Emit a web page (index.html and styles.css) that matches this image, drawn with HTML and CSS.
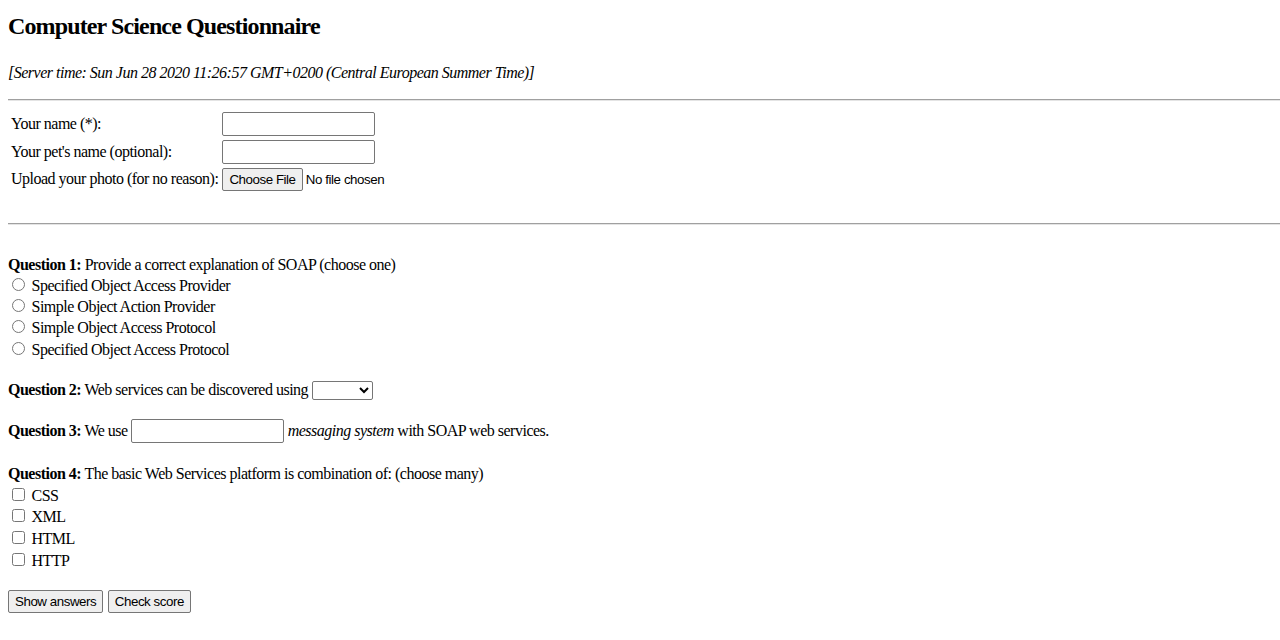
FILE: index.html
```html
<!DOCTYPE html>
<html lang="en">
<head>
    <meta charset="UTF-8">
    <title>Computer Science Questionnaire</title>
    <link rel="stylesheet" href="styles.css">
</head>
<body>
    <h2 class="title">Computer Science Questionnaire</h2>
    <p class="server-time"><i>[Server time: Sun Jun 28 2020 11:26:57 GMT+0200 (Central European Summer Time)]</i></p>
    <hr>

    <form class="quiz">
        <table class="user-info">
            <tr>
                <td>Your name (*):</td>
                <td><input type="text" class="text-field"></td>
            </tr>
            <tr>
                <td>Your pet's name (optional):</td>
                <td><input type="text" class="text-field"></td>
            </tr>
            <tr>
                <td>Upload your photo (for no reason):</td>
                <td><span class="file-field"><button type="button" class="btn">Choose File</button> No file chosen</span></td>
            </tr>
        </table>
        <br>
        <hr class="divider">

        <!-- Question 1 -->
        <div class="question first">
            <b>Question 1:</b> Provide a correct explanation of SOAP (choose one)<br>
            <label class="option"><input type="radio" name="q1"> Specified Object Access Provider</label><br>
            <label class="option"><input type="radio" name="q1"> Simple Object Action Provider</label><br>
            <label class="option"><input type="radio" name="q1"> Simple Object Access Protocol</label><br>
            <label class="option"><input type="radio" name="q1"> Specified Object Access Protocol</label>
        </div>

        <!-- Question 2 -->
        <div class="question">
            <b>Question 2:</b> Web services can be discovered using
            <select class="select-field">
                <option></option>
                <option>UDDI</option>
                <option>WSDL</option>
                <option>XML</option>
            </select>
        </div>

        <!-- Question 3 -->
        <div class="question wide-gap">
            <b>Question 3:</b> We use <input type="text" class="text-field"> <i>messaging system</i> with SOAP web services.
        </div>

        <!-- Question 4 -->
        <div class="question checks">
            <b>Question 4:</b> The basic Web Services platform is combination of: (choose many)<br>
            <label class="option"><input type="checkbox"> CSS</label><br>
            <label class="option"><input type="checkbox"> XML</label><br>
            <label class="option"><input type="checkbox"> HTML</label><br>
            <label class="option"><input type="checkbox"> HTTP</label>
        </div>

        <div class="actions">
            <button type="button" class="btn">Show answers</button>
            <button type="button" class="btn">Check score</button>
        </div>
    </form>
</body>
</html>
```

FILE: styles.css
```css
body {
    margin: 0;
    padding: 0 8px 8px;
    font-family: "Liberation Serif", "Times New Roman", serif;
    font-size: 16px;
    letter-spacing: -0.5px;
    color: #000;
    background: #fff;
}
.title {
    font-size: 24px;
    letter-spacing: -0.87px;
    margin: 13px 0 24px;
}
.server-time {
    margin: 0 0 16.5px;
}
hr {
    border: none;
    border-top: 1px solid #a0a0a0;
    border-bottom: 1px solid #e4e4e4;
    margin: 0 -8px 8px 0;
}
hr.divider {
    margin-top: 11px;
}
.user-info {
    border-spacing: 2px;
}
.user-info td {
    padding: 1px;
}
.text-field {
    box-sizing: border-box;
    width: 153px;
    height: 24px;
    margin: 0;
    border: 1px solid #767676;
    border-radius: 2px;
    font-family: "Liberation Sans", Arial, sans-serif;
    font-size: 13.33px;
}
.file-field {
    font-family: "Liberation Sans", Arial, sans-serif;
    font-size: 13.33px;
    letter-spacing: -0.43px;
}
.btn {
    box-sizing: border-box;
    height: 23px;
    margin: 0;
    font-family: "Liberation Sans", Arial, sans-serif;
    font-size: 13.33px;
    letter-spacing: -0.45px;
    color: #000;
    background: #efefef;
    border: 1px solid #767676;
    border-radius: 2px;
    padding: 1px 6px;
}
.question {
    line-height: 21.3px;
    margin: 0 0 19px;
}
.question.first {
    margin-top: 29px;
}
.question.wide-gap {
    margin-bottom: 20px;
}
.question.checks {
    line-height: 21.6px;
}
.option input {
    margin: 3px 3px 0 4px;
}
.select-field {
    box-sizing: border-box;
    width: 61px;
    height: 19px;
    font-family: "Liberation Sans", Arial, sans-serif;
    font-size: 13.33px;
    border: 1px solid #767676;
    border-radius: 2px;
    background: #fff;
}
.actions {
    margin-top: 18px;
}
.actions .btn {
    margin-right: 1px;
}
```
